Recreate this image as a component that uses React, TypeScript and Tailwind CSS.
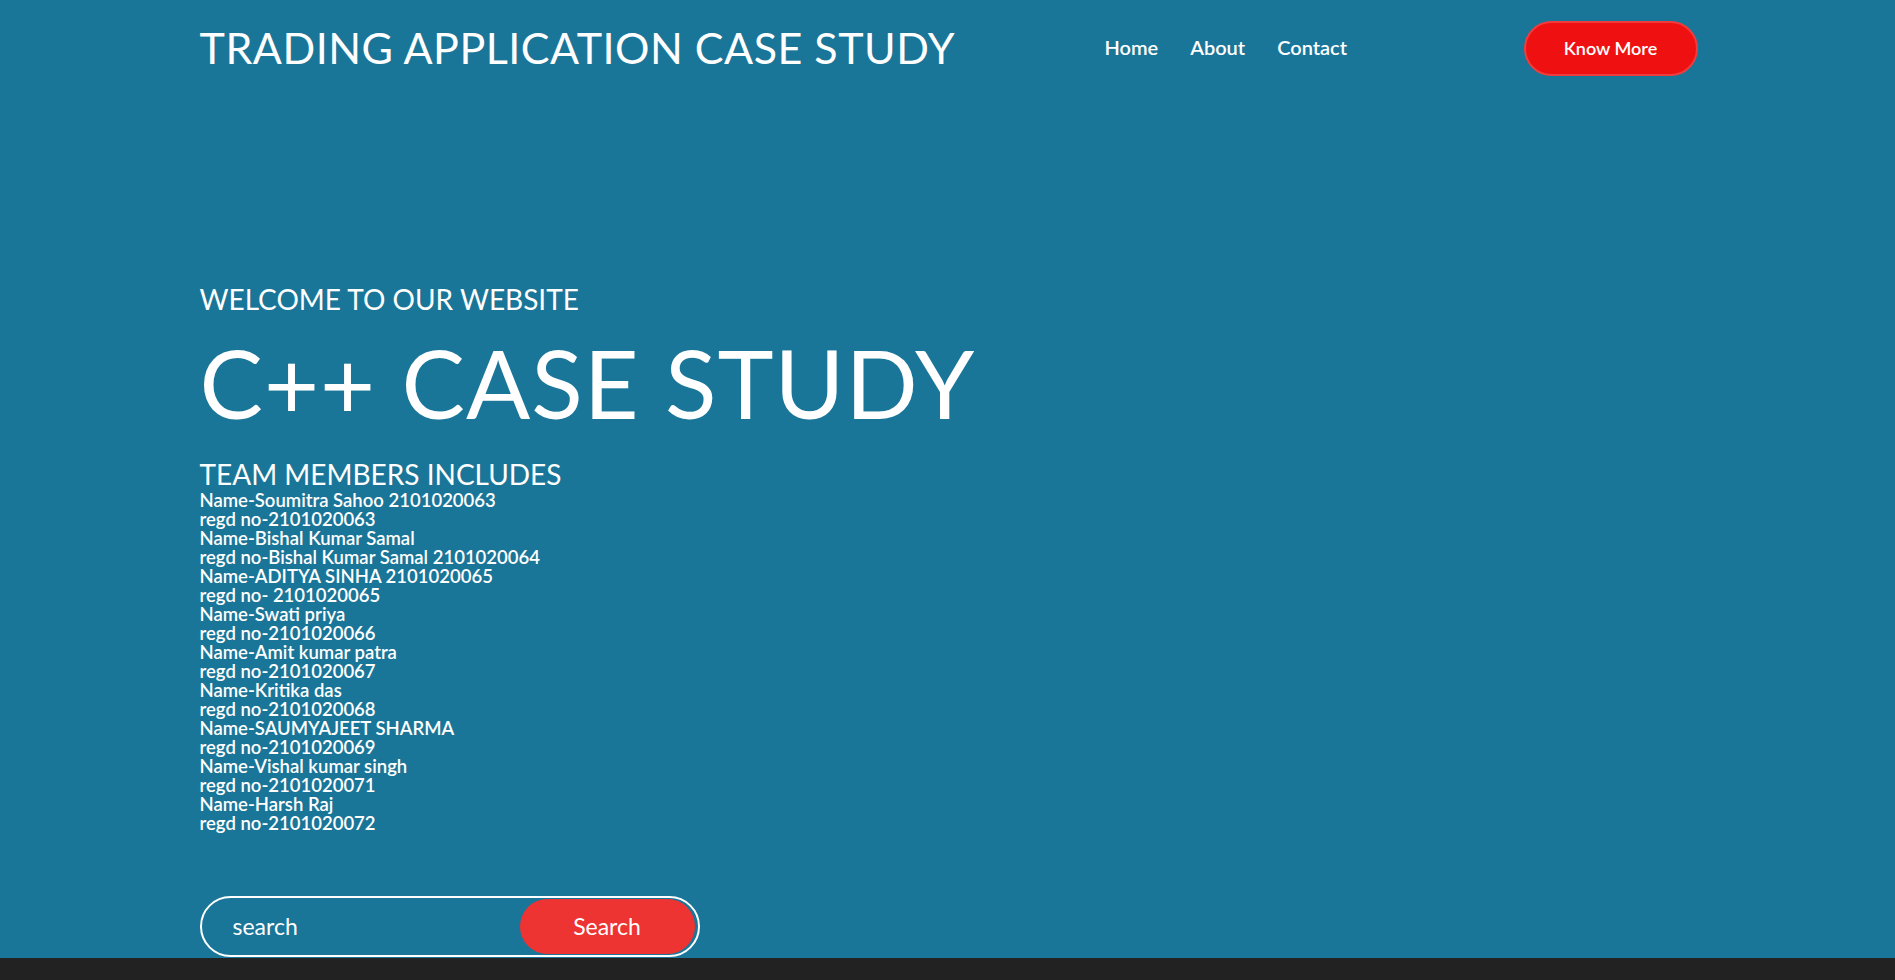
export default function App() {
  const members = [
    'Name-Soumitra Sahoo 2101020063',
    'regd no-2101020063',
    'Name-Bishal Kumar Samal',
    'regd no-Bishal Kumar Samal 2101020064',
    'Name-ADITYA SINHA 2101020065',
    'regd no- 2101020065',
    'Name-Swati priya',
    'regd no-2101020066',
    'Name-Amit kumar patra',
    'regd no-2101020067',
    'Name-Kritika das',
    'regd no-2101020068',
    'Name-SAUMYAJEET SHARMA',
    'regd no-2101020069',
    'Name-Vishal kumar singh',
    'regd no-2101020071',
    'Name-Harsh Raj',
    'regd no-2101020072',
  ];

  return (
    <div className="min-h-screen flex flex-col bg-[#222222] font-['Lato',sans-serif] text-white">
      <div className="bg-[#1a7698] h-[958px]">
        <div className="w-[1500px] mx-auto pl-[2px]">
          {/* Header */}
          <header className="flex items-center h-[94px]">
            <h1 className="text-[43px] leading-none tracking-[0.5px] w-[905px]">TRADING APPLICATION CASE STUDY</h1>
            <nav className="flex gap-[32px] text-[20px] font-semibold">
              <a href="#">Home</a>
              <a href="#">About</a>
              <a href="#">Contact</a>
            </nav>
            <button className="ml-auto mt-[3px] w-[174px] h-[55px] rounded-full bg-[#ef1111] border-2 border-[#f03c3c] text-[18px] font-semibold">
              Know More
            </button>
          </header>

          {/* Hero */}
          <section className="pt-[191px]">
            <h3 className="text-[28px] leading-none">WELCOME TO OUR WEBSITE</h3>
            <h1 className="text-[95px] leading-none mt-[22px] tracking-[1px]">C++ CASE STUDY</h1>
            <h2 className="text-[28px] leading-none mt-[30px]">TEAM MEMBERS INCLUDES</h2>
            <div className="text-[18.5px] leading-[19px] font-semibold mt-[3px]">
              {members.map((m, i) => (
                <p key={i}>{m}</p>
              ))}
            </div>

            {/* Search */}
            <form
              className="mt-[63px] w-[500px] h-[61px] border-2 border-white rounded-full flex items-center p-[1px]"
              onSubmit={(e) => e.preventDefault()}
            >
              <input
                className="flex-1 min-w-0 bg-transparent outline-none pl-[30px] text-[23px] placeholder-white"
                placeholder="search"
              />
              <button className="w-[175px] h-[55px] rounded-full bg-[#ee3333] text-[23px] mr-[2px]">Search</button>
            </form>
          </section>
        </div>
      </div>
      <footer className="h-[22px] bg-[#222222]" />
    </div>
  );
}
